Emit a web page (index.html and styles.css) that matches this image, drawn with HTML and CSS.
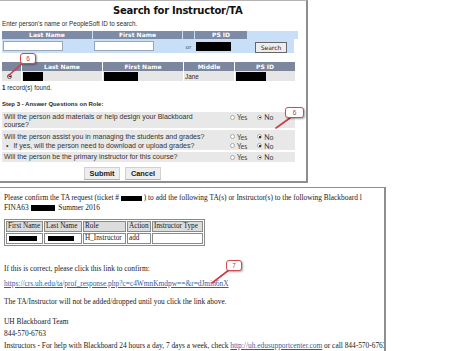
FILE: index.html
```html
<!DOCTYPE html>
<html>
<head>
<meta name="viewport" content="width=device-width, initial-scale=1.0">
<title>Add TA - Blackboard</title>
<link rel="stylesheet" href="styles.css">
</head>

<body>

<div class="page">

<section class="search-panel">
     <h1 class="title">Search for Instructor/TA</h1>
     <p class="hint">Enter person's name or PeopleSoft ID to search.</p>

     <div class="search-grid">
          <div class="th">Last Name</div>
          <div class="th">First Name</div>
          <div class="th"></div>
          <div class="th">PS ID</div>
          <div class="spacer"></div>
          <div class="cell"><span class="field"></span></div>
          <div class="cell"><span class="field"></span></div>
          <div class="cell or">or</div>
          <div class="cell"><span class="redact ps"></span></div>
          <div class="cell"><button type="button" class="btn-search">Search</button></div>
     </div>

     <div class="result-grid">
          <div class="th"></div>
          <div class="th">Last Name</div>
          <div class="th">First Name</div>
          <div class="th">Middle</div>
          <div class="th">PS ID</div>
          <div class="rcell"><span class="radio on"></span></div>
          <div class="rcell"><span class="redact ln"></span></div>
          <div class="rcell"><span class="redact fn"></span></div>
          <div class="rcell">Jane</div>
          <div class="rcell"><span class="redact id"></span></div>
     </div>

     <p class="found"><b>1</b> record(s) found.</p>
     <p class="step">Step 3 - Answer Questions on Role:</p>

     <!-- answer rows -->
     <div class="questions">
          <div class="q-row tall">
               <div class="q-text">Will the person add materials or help design your Blackboard<br>course?</div>
               <div class="q-opts">
                    <div class="opt"><span class="radio"></span>Yes<span class="radio on"></span>No</div>
               </div>
          </div>
          <div class="q-row double">
               <div class="q-text">Will the person assist you in managing the students and grades?<br><span class="bullet">&bull;</span> If yes, will the person need to download or upload grades?</div>
               <div class="q-opts">
                    <div class="opt"><span class="radio"></span>Yes<span class="radio on"></span>No</div>
                    <div class="opt"><span class="radio"></span>Yes<span class="radio on"></span>No</div>
               </div>
          </div>
          <div class="q-row">
               <div class="q-text">Will the person be the primary instructor for this course?</div>
               <div class="q-opts">
                    <div class="opt"><span class="radio"></span>Yes<span class="radio on"></span>No</div>
               </div>
          </div>
     </div>

     <div class="actions">
          <button type="button" class="btn">Submit</button>
          <button type="button" class="btn">Cancel</button>
     </div>
</section>

<section class="email">
     <p class="intro">Please confirm the TA request (ticket # <span class="redact tk"></span> ) to add the following TA(s) or Instructor(s) to the following Blackboard l<br>FINA63 <span class="redact crs"></span> Summer 2016</p>

     <table class="ta-table">
          <tr class="head"><td>First Name</td><td>Last Name</td><td>Role</td><td>Action</td><td>Instructor Type</td></tr>
          <tr><td><span class="redact c1"></span></td><td><span class="redact c2"></span></td><td>H_Instructor</td><td>add</td><td></td></tr>
     </table>

     <p class="confirm">If this is correct, please click this link to confirm:</p>
     <p class="link"><a href="#">https://crs.uh.edu/ta/prof_response.php?c=c4WmnKmdpw==&amp;r=dJmin6nX</a></p>
     <p class="note">The TA/Instructor will not be added/dropped until you click the link above.</p>
     <p class="sig">UH Blackboard Team<br>844-570-6763<br>Instructors - For help with Blackboard 24 hours a day, 7 days a week, check <a href="#">http://uh.edusupportcenter.com</a> or call 844-570-6763</p>
</section>

<!-- numbered callouts laid over the screenshot -->
<svg class="pointers" width="474" height="351" viewBox="0 0 474 351">
     <path d="M24 62 L8 76" />
     <path d="M290 118 L276 128" />
     <path d="M229 270 L212 283" />
</svg>
<div class="callout c-a">6</div>
<div class="callout c-b">6</div>
<div class="callout c-c">7</div>

</div>

</body>
</html>
```

FILE: styles.css
```css
* {box-sizing: border-box;}

body {
  margin: 0;
  background-color: #fff;
}

.page {
  position: relative;
  width: 474px;
  height: 351px;
  overflow: hidden;
}

p {margin: 0}

/* ---------- search panel ---------- */

.search-panel {
  width: 308px;
  height: 183px;
  border-top: 1px solid #b5b5b5;
  border-right: 2px solid #8e8e8e;
  border-bottom: 2px solid #8e8e8e;
  font-family: "Liberation Sans", Arial, sans-serif;
  font-size: 6.3px;
  color: #2a2a2a;
}

.title {
  margin: 0;
  padding: 4px 0 0 113px;
  font-family: "DejaVu Sans", Verdana, sans-serif;
  font-size: 10px;
  line-height: 12px;
  letter-spacing: -0.25px;
  color: #111;
}

.hint {
  margin: 3px 0 0 2px;
  line-height: 8px;
}

.search-grid {
  display: grid;
  grid-template-columns: 90px 89px 11px 52px 50px;
  grid-template-rows: 8px 14px;
  column-gap: 1px;
  width: 292px;
  margin: 3px 0 0 2px;
  background-color: #c9def7;
}

.th {
  background-color: #7d8ba6;
  color: #fff;
  font-family: "DejaVu Sans", Verdana, sans-serif;
  font-weight: bold;
  font-size: 6px;
  line-height: 8px;
  text-align: center;
}

.spacer {background-color: #c9def7}

.cell {
  display: flex;
  align-items: center;
}

.field {
  display: block;
  width: 60px;
  height: 10px;
  margin-left: 1px;
  background-color: #fff;
  border: 1px solid #9aa7b8;
}

.or {
  justify-content: center;
  color: #555;
  font-size: 6px;
  padding-top: 2px;
}

.redact {
  display: inline-block;
  background-color: #000;
  vertical-align: middle;
}

.redact.ps {width: 35px; height: 9px; margin-left: 1px}

.btn-search {
  width: 32px;
  height: 11px;
  margin: 2px 0 0 7px;
  padding: 0;
  background-color: #ededed;
  border: 1px solid #666;
  font-family: "DejaVu Sans", Tahoma, sans-serif;
  font-size: 6px;
  color: #222;
}

.result-grid {
  display: grid;
  grid-template-columns: 19px 80px 80px 50px 60px;
  grid-template-rows: 9px 10px;
  column-gap: 1px;
  width: 294px;
  margin: 9px 0 0 2px;
}

.result-grid .th {
  line-height: 9px;
  background-color: #7c879d;
}

.rcell {
  display: flex;
  align-items: center;
  background-color: #e6e6e6;
  font-size: 6.3px;
  padding-left: 1px;
}

.redact.ln {width: 20px; height: 9px}
.redact.fn {width: 34px; height: 9px}
.redact.id {width: 30px; height: 9px}

.radio {
  display: inline-block;
  width: 5px;
  height: 5px;
  border: 1px solid #a8a8a8;
  border-radius: 50%;
  background-color: #fff;
  position: relative;
  vertical-align: middle;
}

.radio.on::after {
  content: "";
  position: absolute;
  left: 1px;
  top: 1px;
  width: 1.6px;
  height: 1.6px;
  border-radius: 50%;
  background-color: #111;
}

.rcell .radio {margin-left: 4px; border-color: #555}

.found {
  margin: 3px 0 0 2px;
  line-height: 8px;
}

.step {
  margin: 8px 0 0 2px;
  line-height: 8px;
  font-weight: bold;
  font-size: 6px;
}

.questions {
  display: flex;
  flex-direction: column;
  gap: 2px;
  width: 293px;
  margin: 4px 0 0 2px;
}

.q-row {
  display: grid;
  grid-template-columns: 225px 1fr;
  height: 10px;
  background-color: #e8e8e8;
  font-size: 7px;
  color: #333;
}

.q-row.tall {height: 16px}
.q-row.double {height: 20px}

.q-text {
  padding: 1px 0 0 2px;
  line-height: 7.6px;
}

.q-row.double .q-text {padding-top: 2px; line-height: 9px}

.bullet {margin: 0 3px 0 2px}

.q-opts {
  display: flex;
  flex-direction: column;
  padding-top: 1px;
}

.q-row.double .q-opts {padding-top: 2px}

.opt {
  display: flex;
  align-items: center;
  height: 8px;
  font-family: Lato, "Open Sans", sans-serif;
  font-size: 7px;
  color: #444;
}

.q-row.double .opt {height: 9px}

.opt .radio {margin: 0 2px 0 3px}
.opt .radio.on {margin-left: 10px}

.actions {
  display: flex;
  gap: 5px;
  margin: 5px 0 0 84px;
}

.btn {
  width: 36px;
  height: 13px;
  padding: 0;
  background-color: #eeeeee;
  border: 1px solid #d0d0d0;
  border-bottom-color: #b0b0b0;
  font-family: "Liberation Sans", Arial, sans-serif;
  font-weight: bold;
  font-size: 7.4px;
  color: #222;
}

/* ---------- email ---------- */

.email {
  width: 386px;
  height: 170px;
  margin-top: 4px;
  padding-left: 4px;
  border-top: 1px solid #8e8e8e;
  border-right: 2px solid #8e8e8e;
  font-family: "Liberation Serif", "Times New Roman", serif;
  font-size: 7.4px;
  color: #1a1a1a;
  white-space: nowrap;
  overflow: hidden;
}

.intro {
  margin-top: 5px;
  line-height: 10px;
}

.redact.tk {width: 21px; height: 5px}
.redact.crs {width: 24px; height: 6px; margin: 0 1px}

.ta-table {
  margin-top: 6px;
  border: 1px solid #8a8a8a;
  border-collapse: separate;
  border-spacing: 1px;
  font-size: 7.2px;
}

.ta-table td {
  border: 1px solid #8a8a8a;
  padding: 0 1px;
  height: 11px;
  line-height: 9px;
}

.ta-table .head td {background-color: #dcdcdc}

.ta-table td:nth-child(1) {width: 37px}
.ta-table td:nth-child(2) {width: 38px}
.ta-table td:nth-child(3) {width: 43px}
.ta-table td:nth-child(4) {width: 24px}
.ta-table td:nth-child(5) {width: 51px}

.redact.c1 {width: 28px; height: 5px; margin-left: 1px}
.redact.c2 {width: 26px; height: 5px; margin-left: 2px}

.confirm {margin-top: 17px; line-height: 11px}
.link {margin-top: 4px; line-height: 11px}
.note {margin-top: 7px; line-height: 11px}
.sig {margin-top: 9px; line-height: 12px}

.email a {color: #2f5fa6}

/* ---------- callouts ---------- */

.pointers {
  position: absolute;
  left: 0;
  top: 0;
  pointer-events: none;
}

.pointers path {
  stroke: #cf3b43;
  stroke-width: 1.6;
  fill: none;
  stroke-linecap: round;
}

.callout {
  position: absolute;
  height: 11px;
  padding-top: 1px;
  background-color: #fff;
  border: 1.5px solid #d04a50;
  border-radius: 3px;
  box-shadow: 1px 1px 2px rgba(0,0,0,0.35);
  font-family: "Liberation Sans", Arial, sans-serif;
  font-size: 6.5px;
  line-height: 7px;
  text-align: center;
  color: #c4343b;
}

.c-a {left: 20px; top: 53px; width: 16px}
.c-b {left: 285px; top: 107px; width: 19px}
.c-c {left: 226px; top: 260px; width: 16px}
```
